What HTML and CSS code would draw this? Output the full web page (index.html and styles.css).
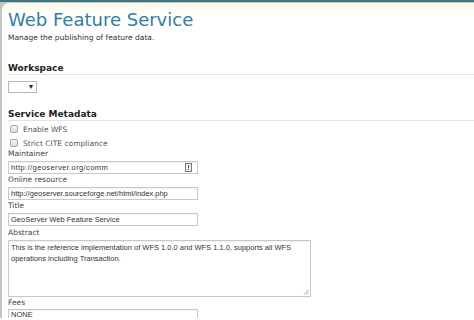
FILE: index.html
```html
<!DOCTYPE html>
<html>
<head>
<meta charset="utf-8">
<link rel="stylesheet" href="styles.css">
</head>
<body>
<div class="frame">
  <div class="panel">
    <h1 class="title">Web Feature Service</h1>
    <p class="desc">Manage the publishing of feature data.</p>

    <h3 class="section">Workspace</h3>
    <div class="select"><span class="arrow">▾</span></div>

    <h3 class="section meta">Service Metadata</h3>
    <label class="check"><span class="box"></span>Enable WFS</label>
    <label class="check"><span class="box"></span>Strict CITE compliance</label>

    <div class="field">
      <div class="label">Maintainer</div>
      <div class="input with-icon">http://geoserver.org/comm
        <svg class="ficon" width="7" height="9" viewBox="0 0 7 9"><rect x="0.5" y="0.5" width="6" height="8" fill="#f4f4f4" stroke="#777"/><rect x="3" y="2" width="1" height="3.2" fill="#555"/><rect x="3" y="6" width="1" height="1" fill="#555"/></svg>
      </div>
    </div>
    <div class="field">
      <div class="label">Online resource</div>
      <div class="input">http://geoserver.sourceforge.net/html/index.php</div>
    </div>
    <div class="field">
      <div class="label">Title</div>
      <div class="input">GeoServer Web Feature Service</div>
    </div>
    <div class="field area">
      <div class="label">Abstract</div>
      <div class="textarea">This is the reference implementation of WFS 1.0.0 and WFS 1.1.0, supports all WFS operations including Transaction.
        <svg class="grip" width="6" height="6" viewBox="0 0 6 6"><path d="M5.5 1 L1 5.5 M5.5 3.5 L3.5 5.5" stroke="#888" stroke-width="0.8"/></svg>
      </div>
    </div>
    <div class="field">
      <div class="label">Fees</div>
      <div class="input last">NONE</div>
    </div>
  </div>
</div>
</body>
</html>
```

FILE: styles.css
```css
* { box-sizing: border-box; }
html, body { margin: 0; padding: 0; background: #fff; }
body { font-family: "DejaVu Sans", Verdana, sans-serif; color: #333; }

.frame {
  border-top: 2px solid #3a7888;
  background: #c4c6c6;
  padding-left: 2px;
  height: 318px;
  overflow: hidden;
}
.panel {
  background: linear-gradient(#fcfcec 0, #ffffff 14px);
  border-top-left-radius: 7px;
  height: 100%;
  padding: 6px 0 0 6px;
  margin-top: 1px;
}

.title {
  margin: 0;
  font-size: 18px;
  line-height: 21px;
  font-weight: normal;
  color: #2d7ea6;
}
.desc {
  margin: 3px 0 0;
  font-size: 7.5px;
  line-height: 10px;
  color: #333;
}

.section {
  margin: 19px 0 0;
  font-size: 9px;
  line-height: 12px;
  font-weight: bold;
  color: #222;
  border-bottom: 1px solid #e6e5cf;
  padding-bottom: 0;
}
.section.meta { margin-top: 15px; }

.select {
  margin-top: 6px;
  width: 29px;
  height: 12px;
  border: 1px solid #b8b8b8;
  background: #fff;
  position: relative;
}
.select .arrow {
  position: absolute;
  right: 3px;
  top: -1px;
  font-size: 8px;
  line-height: 12px;
  color: #222;
}

.check {
  display: flex;
  align-items: center;
  height: 14px;
  font-size: 7.5px;
  color: #555;
  margin-left: 2px;
}
.section.meta + .check { margin-top: 1px; }
.box {
  width: 8px;
  height: 8px;
  border: 1px solid #a8a8a8;
  border-radius: 2px;
  background: linear-gradient(#f4f4f4, #dcdcdc);
  margin-right: 5px;
}

.check + .field { margin-top: -2px; }
.field.area { margin-top: 1px; }
.label {
  font-size: 7.5px;
  line-height: 12.5px;
  color: #444;
}
.input {
  width: 190px;
  height: 13.5px;
  border: 1px solid #c8c8c8;
  box-shadow: inset 0 1px 1px rgba(0,0,0,0.06);
  font-family: "Liberation Sans", Arial, sans-serif;
  font-size: 7.5px;
  line-height: 11.5px;
  padding-left: 2px;
  color: #333;
  position: relative;
}
.input.last { line-height: 9px; }
.with-icon { letter-spacing: 0.4px; }
.ficon {
  position: absolute;
  right: 5px;
  top: 1.5px;
}
.textarea {
  width: 303px;
  height: 57px;
  border: 1px solid #c8c8c8;
  box-shadow: inset 0 1px 1px rgba(0,0,0,0.06);
  font-family: "Liberation Sans", Arial, sans-serif;
  font-size: 7.5px;
  line-height: 11px;
  padding: 1px 2px 0;
  color: #333;
  position: relative;
}
.grip {
  position: absolute;
  right: 1px;
  bottom: 1px;
}
```
